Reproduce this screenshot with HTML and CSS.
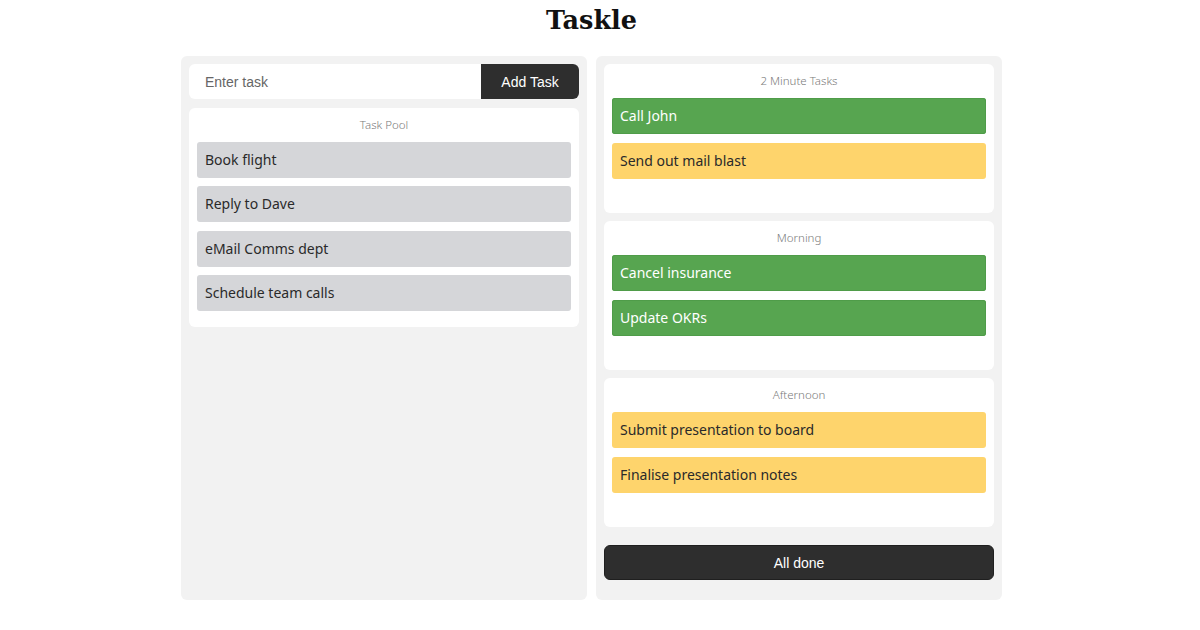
FILE: index.html
```html
<!DOCTYPE html>
<html>
<head>
<meta charset="utf-8">
<link rel="stylesheet" href="styles.css">
</head>
<body>
<div class="app">
  <h1 class="title">Taskle</h1>
  <div class="board">
    <div class="panel">
      <div class="entry">
        <input class="entry-input" type="text" placeholder="Enter task">
        <button class="entry-btn">Add Task</button>
      </div>
      <div class="card">
        <div class="card-title">Task Pool</div>
        <div class="list">
          <div class="task grey">Book flight</div>
          <div class="task grey">Reply to Dave</div>
          <div class="task grey">eMail Comms dept</div>
          <div class="task grey">Schedule team calls</div>
        </div>
      </div>
    </div>
    <div class="panel">
      <div class="card">
        <div class="card-title">2 Minute Tasks</div>
        <div class="list slot">
          <div class="task green">Call John</div>
          <div class="task yellow">Send out mail blast</div>
        </div>
      </div>
      <div class="card">
        <div class="card-title">Morning</div>
        <div class="list slot">
          <div class="task green">Cancel insurance</div>
          <div class="task green">Update OKRs</div>
        </div>
      </div>
      <div class="card">
        <div class="card-title">Afternoon</div>
        <div class="list slot">
          <div class="task yellow">Submit presentation to board</div>
          <div class="task yellow">Finalise presentation notes</div>
        </div>
      </div>
      <button class="done-btn">All done</button>
    </div>
  </div>
</div>
</body>
</html>
```

FILE: styles.css
```css
* { box-sizing: border-box; }
html, body { margin: 0; padding: 0; background: #ffffff; }
body { font-family: "Noto Sans", "Open Sans", sans-serif; color: #333; }

.app { width: 1183px; }

.title {
  margin: 0;
  padding-top: 4px;
  height: 56px;
  line-height: 32px;
  text-align: center;
  font-family: "DejaVu Serif", "Liberation Serif", serif;
  font-weight: bold;
  font-size: 25.5px;
  color: #111;
}

.board {
  width: 821px;
  margin: 0 auto;
  display: grid;
  grid-template-columns: 406px 406px;
  column-gap: 9px;
  align-items: stretch;
}

.panel {
  background: #f2f2f2;
  border-radius: 6px;
  padding: 8px 8px 20px;
  height: 544px;
  display: flex;
  flex-direction: column;
  gap: 8.5px;
}

.entry {
  display: flex;
  height: 35px;
  background: #fff;
  border-radius: 6px;
  flex: none;
}
.entry-input {
  flex: 1;
  min-width: 0;
  border: none;
  outline: none;
  background: transparent;
  padding: 0 16px;
  font-family: "Liberation Sans", Arial, sans-serif;
  font-size: 14px;
  color: #333;
}
.entry-input::placeholder { color: #666; }
.entry-btn {
  width: 98px;
  border: none;
  background: #2e2e2e;
  color: #fff;
  border-radius: 0 6px 6px 0;
  font-family: "Liberation Sans", Arial, sans-serif;
  font-size: 14px;
  padding: 0;
}

.card {
  background: #fff;
  border-radius: 6px;
  padding: 8px 8px 7px;
  flex: none;
}
.card-title {
  height: 18px;
  line-height: 18px;
  margin-bottom: 8px;
  text-align: center;
  font-size: 11.5px;
  font-weight: 300;
  color: #7a7a7a;
}
.list.slot { min-height: 107.5px; }

.task {
  height: 36px;
  line-height: 36px;
  margin-bottom: 8.5px;
  padding: 0 8px;
  border-radius: 3px;
  font-size: 14px;
  color: #2a2a2a;
}
.task.grey { background: #d5d6d9; }
.task.green { background: #57a550; color: #fff; box-shadow: inset 0 0 0 1px #4f9c49; }
.task.yellow { background: #fed46c; }

.done-btn {
  margin-top: 10px;
  height: 35px;
  flex: none;
  border: 1px solid #1f1f1f;
  background: #2e2e2e;
  color: #fff;
  border-radius: 6px;
  font-family: "Liberation Sans", Arial, sans-serif;
  font-size: 14px;
}
```
